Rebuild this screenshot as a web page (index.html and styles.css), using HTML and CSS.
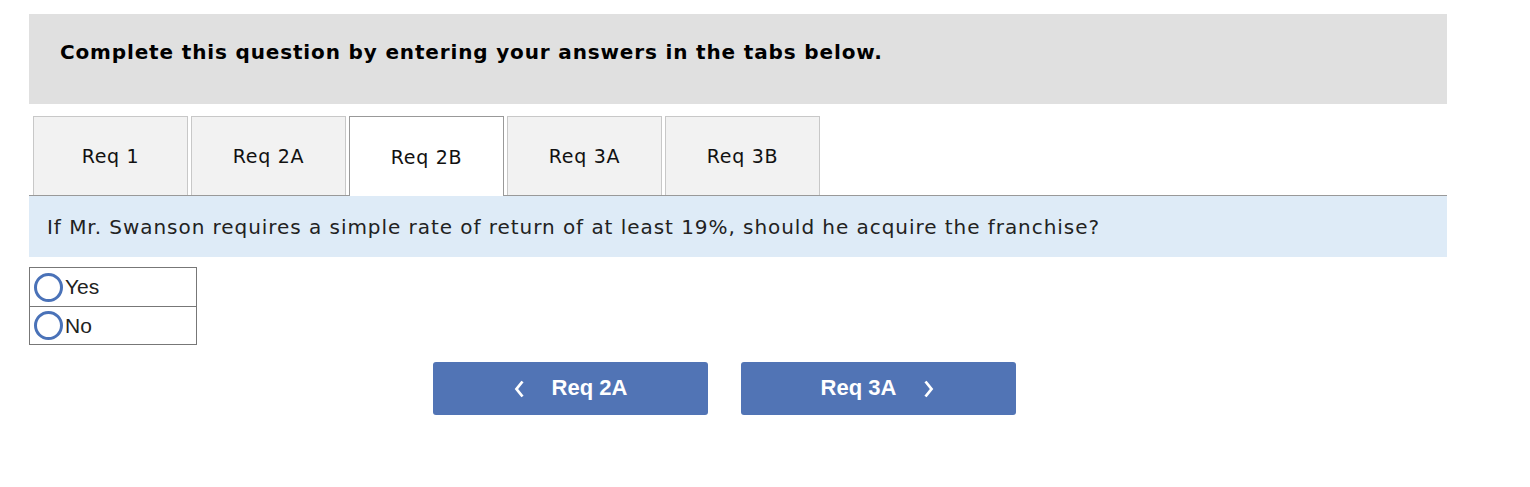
FILE: index.html
```html
<!DOCTYPE html>
<html lang="en">
<head>
    <meta charset="UTF-8">
    <title>Req 2B</title>
    <link rel="stylesheet" href="styles.css">
</head>
<body>
    <div class="page">
        <div class="instructions">
            <h2>Complete this question by entering your answers in the tabs below.</h2>
        </div>
        <div class="tabs">
            <div class="tab">Req 1</div>
            <div class="tab">Req 2A</div>
            <div class="tab active">Req 2B</div>
            <div class="tab">Req 3A</div>
            <div class="tab">Req 3B</div>
        </div>
        <div class="question">If Mr. Swanson requires a simple rate of return of at least 19%, should he acquire the franchise?</div>
        <div class="choices">
            <label class="choice"><span class="radio"></span>Yes</label>
            <label class="choice"><span class="radio"></span>No</label>
        </div>
        <div class="nav">
            <button class="nav-btn">
                <svg width="12" height="20" viewBox="0 0 12 20"><path d="M9.5 2.5 L3.5 10 L9.5 17.5" fill="none" stroke="#fff" stroke-width="2.8"/></svg>
                <span>Req 2A</span>
            </button>
            <button class="nav-btn">
                <span>Req 3A</span>
                <svg width="12" height="20" viewBox="0 0 12 20"><path d="M2.5 2.5 L8.5 10 L2.5 17.5" fill="none" stroke="#fff" stroke-width="2.8"/></svg>
            </button>
        </div>
    </div>
</body>
</html>
```

FILE: styles.css
```css
body {
  margin: 0;
  font-family: "DejaVu Sans", Verdana, sans-serif;
  background-color: #fff;
  color: #111;
}
.page {
  width: 1418px;
  padding: 14px 0 0 29px;
}
.instructions {
  background-color: #e0e0e0;
  height: 90px;
  padding: 0 31px;
  display: flex;
  align-items: center;
}
.instructions h2 {
  margin: 0 0 14px 0;
  font-size: 20px;
  letter-spacing: 0.85px;
  font-weight: bold;
  color: #000;
}
.tabs {
  display: flex;
  gap: 3px;
  margin-top: 12px;
  padding-left: 4px;
  border-bottom: 1px solid #999;
}
.tab {
  width: 153px;
  height: 78px;
  background-color: #f2f2f2;
  border: 1px solid #c8c8c8;
  border-bottom: none;
  display: flex;
  align-items: center;
  justify-content: center;
  font-size: 19px;
  letter-spacing: 0.7px;
  color: #111;
}
.tab.active {
  background-color: #fff;
  border-color: #999;
  margin-bottom: -1px;
  height: 79px;
}
.question {
  background-color: #deebf7;
  height: 61px;
  display: flex;
  align-items: center;
  padding-left: 18px;
  font-size: 20px;
  letter-spacing: 0.95px;
  color: #222;
}
.choices {
  margin-top: 10px;
  width: 166px;
  border: 1px solid #777;
  font-family: "Liberation Sans", Arial, sans-serif;
}
.choice {
  display: flex;
  align-items: center;
  height: 38px;
  font-size: 21px;
  color: #222;
}
.choice + .choice {
  height: 37px;
  border-top: 1px solid #777;
}
.radio {
  width: 23px;
  height: 23px;
  border: 3px solid #4a72b8;
  border-radius: 50%;
  margin: 0 2px 0 4px;
}
.nav {
  display: flex;
  justify-content: center;
  gap: 33px;
  margin-top: 17px;
  padding-right: 28px;
}
.nav-btn {
  width: 275px;
  height: 53px;
  background-color: #5174b5;
  border: none;
  border-radius: 3px;
  color: #fff;
  font-family: "Liberation Sans", Arial, sans-serif;
  font-size: 22px;
  font-weight: bold;
  display: flex;
  align-items: center;
  justify-content: center;
  gap: 27px;
}
.nav-btn span {
  margin-top: -1px;
}
```
